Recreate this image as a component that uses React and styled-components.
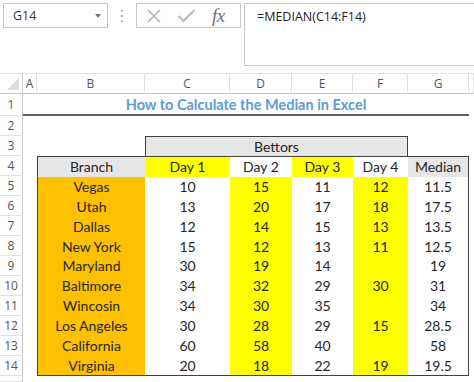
import React from "react";
import styled, { createGlobalStyle } from "styled-components";

const rows = [
  ["Vegas", 10, 15, 11, 12, 11.5],
  ["Utah", 13, 20, 17, 18, 17.5],
  ["Dallas", 12, 14, 15, 13, 13.5],
  ["New York", 15, 12, 13, 11, 12.5],
  ["Maryland", 30, 19, 14, "", 19],
  ["Baltimore", 34, 32, 29, 30, 31],
  ["Wincosin", 34, 30, 35, "", 34],
  ["Los Angeles", 30, 28, 29, 15, 28.5],
  ["California", 60, 58, 40, "", 58],
  ["Virginia", 20, 18, 22, 19, 19.5],
];

const dataColors = ["#ffc000", "#fff", "#ffff00", "#fff", "#ffff00", "#fff"];
const headColors = ["#e7e6e6", "#ffff00", "#fff", "#ffff00", "#fff", "#e7e6e6"];
const headers = ["Branch", "Day 1", "Day 2", "Day 3", "Day 4", "Median"];
const letters = ["A", "B", "C", "D", "E", "F", "G", ""];

function App() {
  return (
    <Page>
      <GlobalStyle />
      <FormulaRow>
        <NameBox>
          G14
          <Caret />
        </NameBox>
        <Dots>
          <span />
          <span />
          <span />
        </Dots>
        <FxBox>
          <svg width="16" height="16" viewBox="0 0 16 16">
            <path d="M2 2 L14 14 M14 2 L2 14" stroke="#b4b4b4" strokeWidth="1.6" fill="none" />
          </svg>
          <svg width="19" height="15" viewBox="0 0 19 15">
            <path d="M1.5 8 L6.5 13 L17.5 2" stroke="#bdbdbd" strokeWidth="2.2" fill="none" />
          </svg>
          <Fx>fx</Fx>
        </FxBox>
        <FormulaBar>=MEDIAN(C14:F14)</FormulaBar>
      </FormulaRow>

      <Sheet>
        <Corner>
          <svg width="12" height="12" viewBox="0 0 12 12">
            <polygon points="12,0 12,12 0,12" fill="#dcdcdc" />
          </svg>
        </Corner>
        {letters.map((l, i) => (
          <ColHead key={i} $col={i + 2}>{l}</ColHead>
        ))}
        {Array.from({ length: 15 }, (_, i) => (
          <RowHead key={i} $row={i + 2}>{i < 14 ? i + 1 : ""}</RowHead>
        ))}

        <Title>How to Calculate the Median in Excel</Title>
        <Bettors>Bettors</Bettors>

        <Table>
          {headers.map((h, i) => (
            <Cell key={h} $bg={headColors[i]}>{h}</Cell>
          ))}
          {rows.map((r) =>
            r.map((v, i) => (
              <Cell key={r[0] + i} $bg={dataColors[i]}>{v}</Cell>
            ))
          )}
        </Table>
      </Sheet>
    </Page>
  );
}

const GlobalStyle = createGlobalStyle`
  html, body {
    margin: 0;
    padding: 0;
    background: #fff;
  }
  body {
    font-family: "Lato", "Liberation Sans", sans-serif;
    width: 474px;
    height: 382px;
    overflow: hidden;
  }
`;

const Page = styled.div`
  width: 474px;
  height: 382px;
  display: flex;
  flex-direction: column;
`;

const FormulaRow = styled.div`
  height: 73px;
  display: flex;
  align-items: flex-start;
  padding-top: 3px;
  box-sizing: border-box;
  font-family: "Open Sans", "Liberation Sans", sans-serif;
  color: #333;
`;

const NameBox = styled.div`
  margin-left: 3px;
  width: 105px;
  height: 25px;
  box-sizing: border-box;
  border: 1px solid #c8c8c8;
  display: flex;
  align-items: center;
  justify-content: space-between;
  padding: 0 6px 0 9px;
  font-size: 12.5px;
`;

const Caret = styled.span`
  width: 0;
  height: 0;
  border-left: 3.5px solid transparent;
  border-right: 3.5px solid transparent;
  border-top: 4px solid #777;
`;

const Dots = styled.div`
  width: 28px;
  height: 25px;
  display: flex;
  flex-direction: column;
  align-items: center;
  justify-content: center;
  gap: 3px;

  span {
    width: 2px;
    height: 2px;
    background: #b0b0b0;
  }
`;

const FxBox = styled.div`
  width: 105px;
  height: 25px;
  box-sizing: border-box;
  border: 1px solid #c8c8c8;
  display: flex;
  align-items: center;
  gap: 15px;
  padding-left: 9px;
`;

const Fx = styled.span`
  font-family: "Liberation Serif", "DejaVu Serif", serif;
  font-style: italic;
  font-size: 19px;
  color: #707070;
  margin-left: 1px;
  letter-spacing: -0.5px;
`;

const FormulaBar = styled.div`
  margin-left: 3px;
  flex: 1;
  height: 63px;
  box-sizing: border-box;
  border: 1px solid #c8c8c8;
  border-right: none;
  padding: 4px 0 0 12px;
  font-size: 12.5px;
  color: #222;
`;

const Sheet = styled.div`
  flex: 1;
  display: grid;
  grid-template-columns: 23px 14px 108px 85px 62px 61px 55px 61px 1fr;
  grid-template-rows: 21px 22px 20px 20px repeat(11, 20px) 1fr;
`;

const Corner = styled.div`
  grid-column: 1;
  grid-row: 1;
  border-right: 1px solid #d0d0d0;
  border-bottom: 1px solid #c6c6c6;
  border-top: 1px solid #e4e4e4;
  display: flex;
  align-items: flex-end;
  justify-content: flex-end;
  padding: 0 3px 3px 0;
`;

const ColHead = styled.div`
  grid-column: ${(p) => p.$col};
  grid-row: 1;
  border-top: 1px solid #e4e4e4;
  border-right: 1px solid #e1e1e1;
  border-bottom: 1px solid #c6c6c6;
  display: flex;
  align-items: center;
  justify-content: center;
  font-family: "Open Sans", "Liberation Sans", sans-serif;
  font-size: 12px;
  color: #555;
`;

const RowHead = styled.div`
  grid-column: 1;
  grid-row: ${(p) => p.$row};
  border-right: 1px solid #c6c6c6;
  border-bottom: 1px solid #e1e1e1;
  display: flex;
  align-items: center;
  justify-content: center;
  font-family: "Open Sans", "Liberation Sans", sans-serif;
  font-size: 12px;
  color: #555;
`;

const Title = styled.div`
  grid-column: 2 / 9;
  grid-row: 2;
  border-bottom: 2px solid #5f5f5f;
  display: flex;
  align-items: center;
  justify-content: center;
  font-weight: 700;
  font-size: 14.5px;
  color: #5b9bd5;
`;

const Bettors = styled.div`
  grid-column: 4 / 8;
  grid-row: 4;
  background: #e7e6e6;
  border: 1px solid #404040;
  border-bottom: none;
  display: flex;
  align-items: center;
  justify-content: center;
  font-size: 14px;
  color: #222;
`;

const Table = styled.div`
  grid-column: 3 / 9;
  grid-row: 5 / 16;
  border: 1px solid #404040;
  display: grid;
  grid-template-columns: 107px 85px 62px 61px 55px 60px;
  grid-template-rows: repeat(11, 1fr);
`;

const Cell = styled.div`
  background: ${(p) => p.$bg};
  display: flex;
  align-items: center;
  justify-content: center;
  font-size: 14px;
  color: #262626;
`;

export default App;
